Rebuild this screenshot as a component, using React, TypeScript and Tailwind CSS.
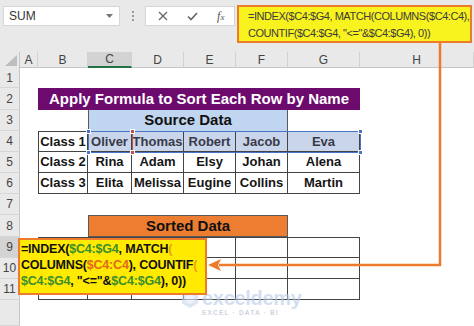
import React from 'react';

const GREEN = 'text-[#3a8e2e]';
const ORANGE = 'text-[#e2691c]';
const PAREN = 'text-[#e9a414]';

const colHeaders = [
  { label: 'A', cls: 'col-start-2' },
  { label: 'B', cls: 'col-start-3' },
  { label: 'C', cls: 'col-start-4', active: true },
  { label: 'D', cls: 'col-start-5' },
  { label: 'E', cls: 'col-start-6' },
  { label: 'F', cls: 'col-start-7' },
  { label: 'G', cls: 'col-start-8' },
  { label: 'H', cls: 'col-start-9' },
];

const rowHeaders = [
  { label: '1', cls: 'row-start-2' },
  { label: '2', cls: 'row-start-3' },
  { label: '3', cls: 'row-start-4' },
  { label: '4', cls: 'row-start-5' },
  { label: '5', cls: 'row-start-6' },
  { label: '6', cls: 'row-start-7' },
  { label: '7', cls: 'row-start-8' },
  { label: '8', cls: 'row-start-9' },
  { label: '9', cls: 'row-start-10', active: true },
  { label: '10', cls: 'row-start-11' },
  { label: '11', cls: 'row-start-12' },
  { label: '', cls: 'row-start-13' },
];

const colStarts = ['col-start-3', 'col-start-4', 'col-start-5', 'col-start-6', 'col-start-7', 'col-start-8'];

const sourceRows = [
  { row: 'row-start-5', cells: ['Class 1', 'Oliver', 'Thomas', 'Robert', 'Jacob', 'Eva'], top: true },
  { row: 'row-start-6', cells: ['Class 2', 'Rina', 'Adam', 'Elsy', 'Johan', 'Alena'] },
  { row: 'row-start-7', cells: ['Class 3', 'Elita', 'Melissa', 'Eugine', 'Collins', 'Martin'] },
];

const sortedRows = [
  { row: 'row-start-10', top: true },
  { row: 'row-start-11' },
  { row: 'row-start-12' },
];

const Handle = ({ className }: { className: string }) => (
  <div className={`absolute w-[5px] h-[5px] border border-white ${className}`} />
);

const App: React.FC = () => {
  return (
    <div className="relative w-[474px] h-[326px] overflow-hidden bg-white font-['Liberation_Sans',Arial,sans-serif]">
      {/* Formula bar */}
      <div className="h-[52px] bg-[#e9e9e9] flex items-start pt-[5px] pl-[3px]">
        <div className="mt-[1px] w-[117px] h-[20px] bg-white border border-[#d6d6d6] flex items-center justify-between pl-[5px] pr-[6px] text-[12px] text-[#333]">
          <span>SUM</span>
          <svg width="7" height="4" viewBox="0 0 7 4">
            <path d="M0 0 H7 L3.5 4 Z" fill="#777" />
          </svg>
        </div>
        <div className="w-[25px] h-[22px] flex flex-col items-center justify-center gap-[2px]">
          <span className="w-[2px] h-[2px] bg-[#9a9a9a]" />
          <span className="w-[2px] h-[2px] bg-[#9a9a9a]" />
          <span className="w-[2px] h-[2px] bg-[#9a9a9a]" />
        </div>
        <div className="mt-[1px] w-[90px] h-[20px] bg-white border border-[#d6d6d6] flex items-center justify-around pl-[2px]">
          <svg width="10" height="10" viewBox="0 0 10 10">
            <path d="M1 1 L9 9 M9 1 L1 9" stroke="#666" strokeWidth="1.3" />
          </svg>
          <svg width="11" height="9" viewBox="0 0 11 9">
            <path d="M1 4.5 L4 7.5 L10 1" stroke="#666" strokeWidth="1.6" fill="none" />
          </svg>
          <span className="font-['Liberation_Serif',serif] italic text-[12px] text-[#555] leading-none">
            f<span className="text-[9px]">x</span>
          </span>
        </div>
        <div className="ml-[2px] w-[235px] h-[38px] bg-[#f8f21e] border-2 border-[#ee7b2c] pl-[9px] pt-[1px] text-[11px] leading-[17px] text-[#3c3c3c] tracking-[-0.45px] whitespace-nowrap overflow-hidden">
          <div>=INDEX($C4:$G4, MATCH(COLUMNS($C4:C4),</div>
          <div>COUNTIF($C4:$G4, "&lt;="&amp;$C4:$G4), 0))</div>
        </div>
      </div>

      {/* Sheet */}
      <div className="grid grid-cols-[20px_18px_50px_44px_52px_52px_52px_72px_114px] grid-rows-[16px_20px_22px_21px_21px_21px_21px_21px_22px_21px_21px_21px_26px]">
        {/* corner */}
        <div className="col-start-1 row-start-1 bg-[#e9e9e9] border-r border-[#c6c6c6] flex items-end justify-end p-[2px]">
          <svg width="12" height="11" viewBox="0 0 12 11">
            <path d="M12 0 V11 H0 Z" fill="#bdbdbd" />
          </svg>
        </div>
        {colHeaders.map((h) => (
          <div
            key={h.label}
            className={`${h.cls} row-start-1 flex items-center justify-center text-[12px] text-[#444] border-r border-[#d2d2d2] ${
              h.active ? 'bg-[#d3d3d3] border-b-2 border-b-[#217346]' : 'bg-[#e9e9e9] border-b border-b-[#c6c6c6]'
            }`}
          >
            {h.label}
          </div>
        ))}
        {rowHeaders.map((r, i) => (
          <div
            key={i}
            className={`col-start-1 ${r.cls} flex items-center justify-center text-[12px] text-[#444] border-r border-r-[#c6c6c6] border-b border-b-[#d6d6d6] ${
              r.active ? 'bg-[#d3d3d3]' : 'bg-[#e9e9e9]'
            }`}
          >
            {r.label}
          </div>
        ))}

        {/* Title */}
        <div className="col-start-3 col-span-6 row-start-3 bg-[#6c0b6d] text-white font-bold text-[15px] flex items-center justify-center">
          Apply Formula to Sort Each Row by Name
        </div>

        {/* Source Data header */}
        <div className="col-start-4 col-span-4 row-start-4 bg-[#c0d5ef] border-l border-r border-[#5a5a5a] flex items-center justify-center font-bold text-[15px] text-[#111]">
          Source Data
        </div>

        {/* Source table */}
        {sourceRows.map((r) =>
          r.cells.map((c, i) => (
            <div
              key={r.row + i}
              className={`${colStarts[i]} ${r.row} border-r border-b border-[#444] flex items-center justify-center font-bold text-[13px] ${
                i === 0 ? 'border-l' : ''
              } ${r.top ? 'border-t' : ''} ${r.top && i > 0 ? 'bg-[#c8d5ea] text-[#3a3a48]' : 'text-[#151515]'}`}
            >
              {c}
            </div>
          ))
        )}

        {/* Sorted Data header */}
        <div className="col-start-4 col-span-4 row-start-9 bg-[#ed7d31] border border-[#5a5a5a] flex items-center justify-center font-bold text-[15px] text-[#111]">
          Sorted Data
        </div>

        {/* Sorted table */}
        {sortedRows.map((r) =>
          colStarts.map((c, i) => (
            <div
              key={r.row + i}
              className={`${c} ${r.row} border-r border-b border-[#444] ${i === 0 ? 'border-l' : ''} ${r.top ? 'border-t' : ''}`}
            />
          ))
        )}
      </div>

      {/* Reference highlight on row 4 */}
      <div className="absolute left-[88px] top-[131px] w-[45px] h-[22px] border-[1.5px] border-[#c0504d]" />
      <div className="absolute left-[88px] top-[131px] w-[273px] h-[22px] border-[1.5px] border-[#4a74c9]" />
      <Handle className="left-[86px] top-[129px] bg-[#4a74c9]" />
      <Handle className="left-[86px] top-[150px] bg-[#4a74c9]" />
      <Handle className="left-[358px] top-[129px] bg-[#4a74c9]" />
      <Handle className="left-[358px] top-[150px] bg-[#4a74c9]" />
      <Handle className="left-[130px] top-[129px] bg-[#c0504d]" />
      <Handle className="left-[130px] top-[150px] bg-[#c0504d]" />

      {/* Watermark */}
      <div className="absolute left-[180px] top-[288px] flex items-start gap-[2px] opacity-60 pointer-events-none">
        <svg width="20" height="20" viewBox="0 0 20 20" className="mt-[1px]">
          <path d="M10 1 L18 5.5 V14.5 L10 19 L2 14.5 V5.5 Z" fill="#c9d6ee" />
          <path d="M10 5 L14.5 7.5 V12.5 L10 15 L5.5 12.5 V7.5 Z" fill="#e3eaf7" />
        </svg>
        <div className="flex flex-col leading-none">
          <span className="text-[20px] font-bold text-[#b9c9e8] tracking-[-0.3px]">exceldemy</span>
          <span className="text-[6.5px] font-bold text-[#b0b8c8] tracking-[1.2px] mt-[2px]">EXCEL · DATA · BI</span>
        </div>
      </div>

      {/* Callout */}
      <div className="absolute left-[18px] top-[238px] w-[189px] h-[57px] bg-[#ffea00] border-2 border-[#ee7b2c] px-[1px] pt-[1px] text-[12.5px] leading-[16px] font-bold text-[#111] tracking-[-0.2px] whitespace-nowrap">
        <div>
          =INDEX(<span className={GREEN}>$C4:$G4</span>, MATCH<span className={PAREN}>(</span>
        </div>
        <div>
          COLUMNS(<span className={ORANGE}>$C4:C4</span>), COUNTIF<span className={PAREN}>(</span>
        </div>
        <div>
          <span className={GREEN}>$C4:$G4</span>, "&lt;="&amp;<span className={GREEN}>$C4:$G4</span>), 0))
        </div>
      </div>

      {/* Arrow connector */}
      <svg className="absolute left-0 top-0 pointer-events-none" width="474" height="326" viewBox="0 0 474 326">
        <path d="M440 43 V265 H219" stroke="#ee7b2c" strokeWidth="2.5" fill="none" />
        <path d="M208 265 L221 259 L218 265 L221 271 Z" fill="#ee7b2c" />
      </svg>
    </div>
  );
};

export default App;
